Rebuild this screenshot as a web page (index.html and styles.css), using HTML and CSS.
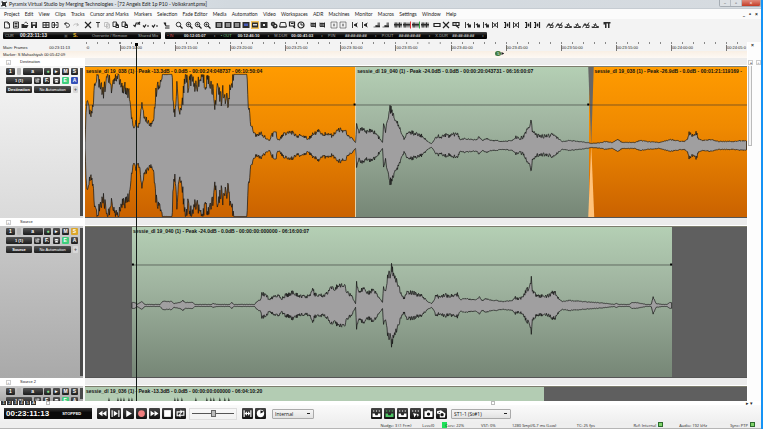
FILE: index.html
```html
<!DOCTYPE html>
<html lang="en">
<head>
<meta charset="utf-8">
<title>Pyramix Virtual Studio</title>
<link rel="stylesheet" href="styles.css">
</head>
<body>
<svg class="sprite" aria-hidden="true">
  <symbol id="new" viewBox="0 0 16 16"><path d="M3 2h7l3 3v9H3z" class="l"/><path d="M10 2v4h3" class="l"/></symbol>
  <symbol id="props" viewBox="0 0 16 16"><path d="M3 2h10v12H3zM5 5h6M5 8h6M5 11h6" class="l"/></symbol>
  <symbol id="open" viewBox="0 0 16 16"><path d="M1 6h5l1 2h8l-3 6H1z" class="f"/><path d="M7 4c3-3 6-1 6 2" class="l"/></symbol>
  <symbol id="save" viewBox="0 0 16 16"><path d="M2 2h12v12H2z" class="f"/><path d="M5 3h6v4H5zM6 10h4v4H6z" class="w"/></symbol>
  <symbol id="film" viewBox="0 0 16 16"><path d="M1 2h14v12H1z" class="f"/><path d="M3 4h4v3H3zM9 4h4v3H9zM3 9h4v3H3zM9 9h4v3H9z" class="w"/></symbol>
  <symbol id="split" viewBox="0 0 16 16"><path d="M2 3h5v10H2zM10 3h4v10h-4M4 8h8" class="l"/></symbol>
  <symbol id="undo" viewBox="0 0 16 16"><path d="M3 6c5-3 10-1 10 3 0 3-4 4-7 3M7 2L3 6l4 3" class="l"/></symbol>
  <symbol id="redo" viewBox="0 0 16 16"><path d="M13 8C9 5 4 5 3 9M10 4l3 4-4 2" class="l dim"/></symbol>
  <symbol id="cut" viewBox="0 0 16 16"><path d="M2 2l12 12M14 2L2 14" class="l bold"/></symbol>
  <symbol id="trim" viewBox="0 0 16 16"><path d="M4 3h8M8 3v10" class="l"/></symbol>
  <symbol id="copyd" viewBox="0 0 16 16"><path d="M3 3h7v8H3zM7 6h6v8H7z" class="l dim"/></symbol>
  <symbol id="copy" viewBox="0 0 16 16"><path d="M2 2h7v9H2z" class="l"/><path d="M7 5h4l3 3v6H7z" class="f"/><path d="M9 10h3v2H9z" class="w"/></symbol>
  <symbol id="fade" viewBox="0 0 16 16"><path d="M1 8l3 3 3-8M9 3l5 4M9 7l5-5" class="l bold"/></symbol>
  <symbol id="fade2" viewBox="0 0 16 16"><path d="M2 9l3 3 3-5M10 10h4" class="l bold"/></symbol>
  <symbol id="loop" viewBox="0 0 16 16"><path d="M2 3l4 7h7M4 14h9M5 3v5" class="l bold"/></symbol>
  <symbol id="zoom" viewBox="0 0 16 16"><circle cx="7" cy="7" r="4.5" class="l"/><path d="M10 10l5 5" class="l bold"/></symbol>
  <symbol id="zoomin" viewBox="0 0 16 16"><circle cx="7" cy="7" r="4.5" class="l"/><path d="M10 10l5 5" class="l bold"/><path d="M5 7h4M7 5v4" class="l"/></symbol>
  <symbol id="panel" viewBox="0 0 16 16"><path d="M1 2h14v12H1z" class="f"/><path d="M4 5h8v2H4zM4 9h8v2H4z" class="w"/></symbol>
  <symbol id="panelb" viewBox="0 0 16 16"><path d="M1 2h14v12H1z" class="f"/><path d="M4 5h8v5H4z" fill="#4659b5"/></symbol>
  <symbol id="panely" viewBox="0 0 16 16"><path d="M0 0h16v16H0z" fill="#f1c15a"/><path d="M2 3h12v10H2z" class="f"/><path d="M4 6h8v3H4z" fill="#ddd"/></symbol>
  <symbol id="screen" viewBox="0 0 16 16"><path d="M1 2h14v12H1z" class="f"/><path d="M6 6h4v4H6z" class="w"/></symbol>
  <symbol id="reel" viewBox="0 0 16 16"><circle cx="6" cy="6" r="4.5" class="f"/><circle cx="10" cy="10" r="5" class="f"/><path d="M5 5h2v2H5zM9 8h3v3H9z" class="w"/></symbol>
  <symbol id="disk" viewBox="0 0 16 16"><path d="M3 3h10l2 9H1z" class="l"/><path d="M2 11h12v2H2z" class="f"/></symbol>
  <symbol id="note" viewBox="0 0 16 16"><path d="M3 2h10v8H3zM6 5h5M10 10l4 4" class="l bold"/></symbol>
  <symbol id="clock" viewBox="0 0 16 16"><circle cx="8" cy="8" r="6" class="l bold"/><path d="M8 4v4h4" class="l"/></symbol>
  <symbol id="grid" viewBox="0 0 16 16"><path d="M2 3h9v8H2z" fill="#999"/><path d="M4 5h10M4 8h10M4 11h10M13 3v10" class="l"/></symbol>
  <symbol id="ibox" viewBox="0 0 16 16"><path d="M2 2h12v12H2zM8 5v6M6 8h4" class="l thin"/></symbol>
  <symbol id="mark" viewBox="0 0 16 16"><path d="M3 2v12M13 4L6 8l7 4" class="l"/><path d="M7 6h5v4H7z" class="f"/></symbol>
  <symbol id="ramp" viewBox="0 0 16 16"><path d="M1 13h13V3H9v5H5v3H1z" fill="#777"/><path d="M5 9h9v3H5z" class="f"/></symbol>
  <symbol id="bars" viewBox="0 0 16 16"><path d="M0 3h16v10H0z" fill="#999"/><path d="M0 6h16v3H0zM3 3h2v10H3zM10 3h2v10h-2z" class="f"/></symbol>
  <symbol id="barsr" viewBox="0 0 16 16"><path d="M0 3h14v10H0z" fill="#999"/><path d="M0 6h14v3H0zM3 3h2v10H3z" class="f"/><path d="M14 1h2v14h-2z" fill="#d33"/></symbol>
  <symbol id="barsg" viewBox="0 0 16 16"><path d="M0 3h14v10H0z" fill="#999"/><path d="M0 6h14v3H0zM3 3h2v10H3z" class="f"/><path d="M14 1h2v14h-2z" fill="#3a4"/></symbol>
  <symbol id="box" viewBox="0 0 16 16"><path d="M2 5h12v6H2z" class="l bold"/></symbol>
  <symbol id="gain" viewBox="0 0 16 16"><path d="M2 3h12v6H2zM5 6h5M8 9l6 5" class="l bold"/></symbol>
  <symbol id="inl" viewBox="0 0 16 16"><path d="M3 2v12" class="l"/><path d="M5 7l5-3v3h4v6H8V9z" class="f"/></symbol>
  <symbol id="inr" viewBox="0 0 16 16"><path d="M3 2v12M13 2v12M5 4l6 8M11 4l-6 8" class="l"/></symbol>
  <symbol id="edge" viewBox="0 0 16 16"><path d="M2 3h3v10H2M13 2v12M7 8h4M9 5v6" class="l bold"/></symbol>
  <symbol id="env" viewBox="0 0 16 16"><path d="M1 13l5-8 3 6 5-8M3 8h11v5H7" class="l"/></symbol>
  <symbol id="env2" viewBox="0 0 16 16"><path d="M1 12h5l3-7 2 6h4v2H2M5 6l4 4" class="l"/></symbol>
  <symbol id="pi" viewBox="0 0 16 16"><path d="M1 2h14v3h-2v9h-3V5H7v9H4V7H1z" class="f"/></symbol>
  <symbol id="rew" viewBox="0 0 16 16"><path d="M8 3v10L1 8zM15 3v10L8 8z"/></symbol>
  <symbol id="ff" viewBox="0 0 16 16"><path d="M8 3v10l7-5zM1 3v10l7-5z"/></symbol>
  <symbol id="playsel" viewBox="0 0 16 16"><path d="M1 2h2v12H1zM13 2h2v12h-2zM5 3v10l7-5z"/></symbol>
  <symbol id="play" viewBox="0 0 16 16"><path d="M4 2v12l10-6z"/></symbol>
  <symbol id="rec" viewBox="0 0 16 16"><circle cx="8" cy="8" r="6" fill="#f07e7e"/></symbol>
  <symbol id="stop" viewBox="0 0 16 16"><path d="M2 2h12v12H2z"/></symbol>
  <symbol id="cycle" viewBox="0 0 16 16"><path d="M5 12H2V5h8M11 4h3v7H7" fill="none" stroke="#fff" stroke-width="2"/><path d="M8 1l4 4-4 4zM8 7v8l-4-4z"/></symbol>
  <symbol id="span" viewBox="0 0 16 16"><path d="M1 2h2v12H1zM13 2h2v12h-2zM3 8l4-4v3h2V4l4 4-4 4V9H7v3z"/></symbol>
  <symbol id="dial" viewBox="0 0 16 16"><circle cx="8" cy="8" r="6.5"/><path d="M8 8V2l6 3z" fill="#111"/></symbol>
  <symbol id="tray" viewBox="0 0 16 16"><path d="M1 8h4l1 3h4l1-3h4v6H1z"/><path d="M2 2h2v3H2zM7 2h2v3H7zM12 2h2v3h-2z" opacity=".7"/></symbol>
  <symbol id="keys" viewBox="0 0 16 16"><path d="M2 2h2v3H2zM7 2h2v3H7zM12 2h2v3h-2z" opacity=".7"/><path d="M4 7l6 2-4 6zM10 8l4 2-2 4z"/></symbol>
  <symbol id="cam" viewBox="0 0 16 16"><path d="M1 4h4l1-2h4l1 2h4v10H1z"/><circle cx="8" cy="9" r="3" fill="#111"/></symbol>
  <symbol id="cams" viewBox="0 0 16 16"><path d="M0 4l7-2 8 6-1 7H5V9L0 8z"/><circle cx="9" cy="10" r="3" fill="#111"/><circle cx="4" cy="6" r="1" fill="#111"/></symbol>
  <symbol id="route" viewBox="0 0 16 16"><path d="M3 2v11h10M6 3h7v3H6v4h7" fill="none" stroke="#fff" stroke-width="2"/></symbol>
  <symbol id="phone" viewBox="0 0 16 16"><path d="M1 7c2-5 12-5 14 0l-4 1V6H5v2zM5 8h6l2 6H3z"/></symbol>
</svg>

<div class="app">
  <header class="title">
    <span class="logo"></span>
    <span class="name">Pyramix Virtual Studio by Merging Technologies - [72 Angels Edit 1p P10 - Volkskrant.pmx]</span>
    <span class="winbtns"><button aria-label="Minimize">–</button><button aria-label="Restore">▫</button><button class="close" aria-label="Close">×</button></span>
  </header>
  <div class="menubar">
    <nav class="menu">
      <button>Project</button><button>Edit</button><button>View</button><button>Clips</button><button>Tracks</button><button>Cursor and Marks</button><button>Markers</button><button>Selection</button><button>Fade Editor</button><button>Media</button><button>Automation</button><button>Video</button><button>Workspaces</button><button>ADR</button><button>Machines</button><button>Monitor</button><button>Macros</button><button>Settings</button><button>Window</button><button>Help</button>
    </nav>
    <span class="mdi"><b>_</b><b>▫</b><b>×</b></span>
  </div>
  <div class="tools" id="tools"></div>

  <div class="info">
    <div class="lcd cursor"><i>CUR</i><b class="time">00:23:11:13</b><i class="sq">▣</i><b class="solo">S.</b><i>Overwrite / Remove</i><i>Shared Mix</i></div>
    <div class="lcd marks">
      <span><i class="red">• IN</i><b>00:12:05:07</b><b>:</b></span>
      <span><i class="green">• OUT</i><b>00:12:46:10</b><b>:</b></span>
      <span><i>M.DUR</i><b>00:00:41:03</b><b>:</b></span>
      <span><i>P.IN</i><b>##:##:##:##</b><b>:</b></span>
      <span><i>P.OUT</i><b>##:##:##:##</b><b>:</b></span>
      <span><i>X.DUR</i><b>##:##:##:##</b><b>:</b></span>
    </div>
  </div>

  <main class="work">
    <div class="row ruler">
      <div class="side"><span>Main: Frames</span><span>00:23:11:13</span></div>
      <div class="scale"><span class="first">:0</span><span>00:23:10:00</span><span>00:23:15:00</span><span>00:23:20:00</span><span>00:23:25:00</span><span>00:23:30:00</span><span>00:23:35:00</span><span>00:23:40:00</span><span>00:23:45:00</span><span>00:23:50:00</span><span>00:23:55:00</span><span>00:24:00:00</span><span class="last">00:24:05:0</span></div>
      <div class="end">×</div>
    </div>
    <div class="row marker">
      <div class="side">Marker: S Mahashiyah 00:05:42:09</div>
      <div class="flags"><span class="pin">5</span><span class="flag"></span></div>
      <div class="end"></div>
    </div>
    <div class="row head"><div class="side"><button class="fold" aria-label="Fold">+</button>Destination</div><div class="gap"></div><div class="end"><button class="fold up" aria-label="Scroll up">▴</button><button class="fold" aria-label="Zoom in">+</button></div></div>

    <section class="row lane">
      <div class="side panel light">
        <div class="ctl"><button class="n">1</button><button class="mini" aria-label="Color"></button><button class="w">a</button><button class="rdy">●</button><button>▸</button><button>M</button><button>S</button></div>
        <div class="ctl"><button class="in">1 (1)</button><button aria-label="Route"><svg><use href="#route"/></svg></button><button>F.</button><button aria-label="Listen"><svg><use href="#phone"/></svg></button><button class="on">E</button><button class="auto">A</button></div>
        <div class="ctl"><button class="in">Destination</button><button class="am">No Automation</button><button class="plus">+</button></div>
        <div class="meter"></div>
      </div>
      <div class="track">
        <div class="clip orange c1">sessie_dl 19_038 (1) - Peak -13.3dB - 0.0dB - 00:00:24:048737 - 06:10:50:04</div>
        <div class="clip sage c2">sessie_dl 19_040 (1) - Peak -24.0dB - 0.0dB - 00:00:20:043731 - 06:16:00:07</div>
        <div class="clip orange c3">sessie_dl 19_038 (1) - Peak -26.9dB - 0.0dB - 00:01:21:119169 -</div>
        <svg class="wave" viewBox="0 0 663 152" preserveAspectRatio="none" aria-hidden="true">
          <path d="M504 0h5.500l-2.500 79z" fill="#666"/><path d="M507 79l-3 73h6z" fill="#ffc27a"/>
          <path id="wave-dest" class="shape"/>
          <path d="M0 38.500h663" class="gainline"/><path d="M269 37h2v2h-2zM503 37h2v2h-2z"/>
        </svg>
      </div>
      <div class="end"><div class="bar"></div></div>
    </section>

    <div class="row head"><div class="side"><button class="fold" aria-label="Fold">+</button>Source</div><div class="gap"></div><div class="end"></div></div>

    <section class="row lane">
      <div class="side panel grey">
        <div class="ctl"><button class="n">1</button><button class="mini" aria-label="Color"></button><button class="w">a</button><button class="rdy">●</button><button>▸</button><button>M</button><button class="soloed">S</button></div>
        <div class="ctl"><button class="in">1 (1)</button><button aria-label="Route"><svg><use href="#route"/></svg></button><button>F.</button><button aria-label="Listen"><svg><use href="#phone"/></svg></button><button class="on">E</button><button>A</button></div>
        <div class="ctl"><button class="in">Source</button><button class="am">No Automation</button><button class="plus">+</button></div>
        <div class="meter"></div>
      </div>
      <div class="track">
        <div class="void v1"></div>
        <div class="clip sage c4">sessie_dl 19_040 (1) - Peak -24.0dB - 0.0dB - 00:00:00:000000 - 06:16:00:07</div>
        <div class="void v2"></div>
        <svg class="wave" viewBox="0 0 663 152" preserveAspectRatio="none" aria-hidden="true">
          <path id="wave-src" class="shape"/>
          <path d="M47 38.500h541" class="gainline"/><path d="M47 37h2v2h-2zM586 37h2v2h-2z"/>
        </svg>
      </div>
      <div class="end"></div>
    </section>

    <div class="row head"><div class="side"><button class="fold" aria-label="Fold">+</button>Source 2</div><div class="gap"></div><div class="end"></div></div>

    <section class="row lane cropped">
      <div class="side panel grey">
        <div class="ctl"><button class="n">1</button><button class="mini" aria-label="Color"></button><button class="w">a</button><button class="rdy">●</button><button>▸</button><button>M</button><button>S</button></div>
        <div class="ctl"><button class="in">1 (1)</button><button aria-label="Route"><svg><use href="#route"/></svg></button><button>F.</button><button aria-label="Listen"><svg><use href="#phone"/></svg></button><button class="on">E</button><button>A</button></div>
        <div class="meter"></div>
      </div>
      <div class="track">
        <div class="clip sage flat c5">sessie_dl 19_036 (1) - Peak -13.3dB - 0.0dB - 00:00:00:000000 - 06:04:10:20</div>
        <div class="void v3"></div>
        <svg class="wave" viewBox="0 0 663 15" preserveAspectRatio="none" aria-hidden="true"><path id="wave-src2" class="peaks"/></svg>
      </div>
      <div class="end"></div>
    </section>
    <div class="playhead"></div>
  </main>

  <div class="pager">
    <span class="pages"><b>1</b><b>2</b><b>3</b><b>4</b><b>5</b><b>A</b></span>
    <span class="knob k1"></span><span class="knob k2"></span><span class="arrows">▸ ▾</span>
  </div>

  <footer class="transport">
    <div class="clock"><b>00:23:11:13</b><span>STOPPED</span></div>
    <div class="grp">
      <button aria-label="Rewind"><svg><use href="#rew"/></svg></button><button aria-label="Play selection"><svg><use href="#playsel"/></svg></button><button aria-label="Play"><svg><use href="#play"/></svg></button><button aria-label="Record"><svg><use href="#rec"/></svg></button><button aria-label="Forward"><svg><use href="#ff"/></svg></button><button aria-label="Stop"><svg><use href="#stop"/></svg></button><button aria-label="Loop"><svg><use href="#cycle"/></svg></button>
    </div>
    <input class="jog" type="range" aria-label="Shuttle">
    <div class="grp">
      <button aria-label="Chase"><svg><use href="#span"/></svg></button><button aria-label="Jog"><svg><use href="#dial"/></svg></button>
    </div>
    <select class="src" aria-label="Machine"><option>Internal</option></select>
    <div class="grp auto-grp">
      <button aria-label="Tray 1"><svg><use href="#tray"/></svg></button><button class="lit" aria-label="Tray 2"><svg><use href="#tray"/></svg></button><button aria-label="Tray 3"><svg><use href="#tray"/></svg></button><button aria-label="Keys"><svg><use href="#keys"/></svg></button><button aria-label="Snapshot"><svg><use href="#cam"/></svg></button><button aria-label="Snapshots"><svg><use href="#cams"/></svg></button>
    </div>
    <select class="bus" aria-label="Bus"><option>ST1-1 (St#1)</option></select>
  </footer>
  <div class="status">
    <span class="s1">Nudge: 3 (1 Frm)</span><span class="s2">Level0</span><span class="s3 load">Core: 22%</span><span class="s4">VST: 0%</span><span class="s5">1280 Smpl/6.7 ms (Low)</span><span class="s6">TC: 25 fps</span><span class="s7">Ref: Internal<em></em></span><span class="s8">Audio: 192 kHz</span><span class="s9">Sync: PTP<em></em></span>
  </div>
</div>
<script src="app.js"></script>
</body>
</html>
```
FILE: styles.css
```css
* { box-sizing: border-box; }
body { margin: 0; background: #fff; color: #222; font: 5px/8px Lato, "Liberation Sans", sans-serif; }
button { margin: 0; padding: 0; border: 0; background: none; color: inherit; font: inherit; }
.sprite { position: absolute; width: 0; height: 0; }
.l { fill: none; stroke: #222; stroke-width: 1.8; }
.bold { stroke-width: 2.4; }
.thin { stroke-width: 1; }
.dim { stroke: #bbb; }
.f { fill: #2c2c2c; }
.w { fill: #eee; }

.app { display: flex; flex-direction: column; min-height: 100vh; border-right: 2px solid #1593f5; overflow: hidden; }

.title { display: flex; align-items: center; gap: 2px; height: 9px; padding-left: 1px; background: linear-gradient(90deg, #e6ebf0, #d2d9df 30%, #d6dbe0); border-bottom: 1px solid #c6ccd2; color: #222; }
.logo { width: 6px; height: 6px; border: 1px dashed #fff; border-radius: 2px; background: #333; }
.name { flex: 1; white-space: nowrap; }
.winbtns { display: flex; align-self: flex-start; height: 7px; line-height: 6px; border: 1px solid #a5acb3; border-top: 0; border-radius: 0 0 2px 2px; overflow: hidden; }
.winbtns button { width: 11px; background: #dde1e5; border-right: 1px solid #b5bbc2; color: #666; }
.winbtns .close { width: 18px; background: linear-gradient(#e08a7b, #c33b25); color: #fff; border: 0; }

.menubar { display: flex; justify-content: space-between; height: 10px; padding: 0 3px 0 4px; align-items: center; background: #fbfbfb; }
.menu { display: flex; justify-content: space-between; width: 60%; }
.menu button { white-space: nowrap; }
.mdi { display: flex; gap: 4px; line-height: 5px; color: #000; }

.tools { display: flex; gap: 3px; width: 80.4%; height: 12px; padding-left: 2px; align-items: center; }
.tools div { display: flex; min-width: 0; }
.tools button { flex: 1 1 0; min-width: 0; height: 9px; display: flex; justify-content: center; align-items: center; }
.tools svg { width: 8px; height: 8px; flex: none; }
.tools, .info { background: #f3f3f3; box-shadow: 200px 0 #f3f3f3; }

.info { display: flex; gap: 4px; padding: 1px 3px 3px; height: 11px; }
.lcd { display: flex; align-items: center; height: 7px; border-radius: 1px; background: linear-gradient(#444, #0c0c0c 50%, #000); color: #e8e8e8; font: 4px/7px "Liberation Sans", sans-serif; white-space: nowrap; }
.lcd i { color: #b0b0b0; font-style: normal; }
.lcd .red { color: #d05050; }
.lcd .green { color: #6dbd7d; }
.lcd .solo { color: #e8b923; }
.lcd .sq { color: #555; }
.cursor { display: grid; grid-template-columns: 15px 44px 9px 19px 46px 1fr; width: 158px; padding-left: 2px; }
.cursor .time, .cursor .solo { font-size: 5px; }
.marks { width: 322px; }
.marks span { flex: 1; display: grid; grid-template-columns: 17px 30px 1fr; padding-left: 2px; }

.work { flex: 1; display: flex; flex-direction: column; position: relative; }
.row { display: grid; grid-template-columns: 85px 1fr 14px; }
.ruler { height: 9px; font: 4px/7px "Liberation Sans", sans-serif; background: #f3f3f3; }
.ruler .side { display: flex; justify-content: space-between; padding: 2px 15px 0 3px; white-space: nowrap; }
.scale { display: flex; overflow: hidden; }
.scale span { flex: 552 1 0; min-width: 0; padding-top: 2px; text-indent: 1px; white-space: nowrap; background: linear-gradient(#777, #777) 0 100% / 1px 6px no-repeat, linear-gradient(90deg, #888 1px, transparent 1px) 0 0 / 20% 2px repeat-x; }
.scale .first { flex-grow: 350; background: linear-gradient(90deg, transparent 9px, #888 9px, #888 10px, transparent 10px) 3px 0 / 11px 2px repeat-x; }
.scale .last { flex-grow: 210; background-size: 1px 6px, 11px 2px; overflow: hidden; }
.ruler .end { padding-left: 3px; font-weight: bold; font-size: 5px; }
.marker { height: 7px; font: 4px/7px "Liberation Sans", sans-serif; background: linear-gradient(#f9efe4, #fdf9f4); }
.marker .side { padding-left: 3px; white-space: nowrap; }
.flags { display: flex; padding-left: 62%; }
.pin { width: 6px; height: 5px; border-radius: 3px; background: #3f7a3f; color: #fff; line-height: 5px; text-align: center; }
.flag { width: 3px; height: 3px; margin-top: 1px; background: #222; clip-path: polygon(0 0, 100% 50%, 0 100%); }

.head { height: 8px; font: 4px/8px "Liberation Sans", sans-serif; background: #fff; }
.head .side { display: flex; align-items: center; gap: 9px; padding-left: 6px; }
.head .gap { background: #ececec; margin-bottom: 1px; }
.head .end { display: flex; justify-content: space-between; align-items: center; }
.fold { width: 5px; height: 5px; border: 1px solid #ccc; line-height: 3px; color: #777; }

.lane { flex: 1 0 152px; }
.cropped { flex: 0 0 15px; height: 15px; grid-template-rows: 100%; overflow: hidden; }
.panel { position: relative; display: flex; flex-direction: column; gap: 2px; padding: 2px 7px 0 6px; min-height: 0; overflow: hidden; }
.panel::after { content: ""; position: absolute; top: 0; right: 0; bottom: 0; width: 2px; background: #f6f6f6; }
.light { background: linear-gradient(#f5f5f5, #dadada); }
.grey { background: linear-gradient(#cacaca, #a9a9a9); }
.meter { position: absolute; top: 2px; right: 2px; bottom: 2px; width: 3px; background: #4a4a4a; }
.ctl { display: flex; flex: none; justify-content: space-between; height: 7px; }
.ctl button { width: 7px; height: 7px; border-radius: 1px; background: linear-gradient(#555, #1c1c1c); color: #fff; font: bold 5px/7px "Liberation Sans", sans-serif; white-space: nowrap; overflow: hidden; }
.ctl svg { width: 5px; height: 5px; display: block; margin: 0 auto; fill: #fff; }
.ctl .n { width: 9px; }
.ctl .mini { width: 4px; background: #b5b5b5; }
.ctl .w { width: 20px; }
.ctl .in { width: 26px; font-size: 4px; }
.ctl .am { width: 37px; font-size: 4px; font-weight: normal; }
.ctl .plus { width: 5px; background: #d8d8d8; color: #555; }
.ctl .rdy { color: #84e08a; }
.ctl .on { background: #3fcf7c; }
.ctl .auto { background: #3450b8; }
.ctl .soloed { background: #dba62b; }

.track { position: relative; display: flex; min-width: 0; border-top: 1px solid #7d7d6d; border-bottom: 1px solid #555; }
.cropped .track { border-bottom: 0; }
.clip { min-width: 0; overflow: hidden; text-indent: 1px; color: #111; font: bold 5px/8px "Liberation Sans", sans-serif; white-space: nowrap; }
.orange { background: linear-gradient(#ff9b00, #f08a00 40%, #ca6200); }
.sage { background: linear-gradient(#b4cfb4, #9fb39f 40%, #768676); }
.flat { background: #b3ccb3; }
.void { background: #5f5f5f; }
.c1 { flex: 271 1 0; border-right: 1px solid #e9d3a8; }
.c2 { flex: 234 1 0; }
.c3 { flex: 158 1 0; text-indent: 5px; }
.v1 { flex: 47 1 0; }
.c4 { flex: 541 1 0; }
.v2 { flex: 75 1 0; }
.c5 { flex: 460 1 0; }
.v3 { flex: 203 1 0; }
.wave { position: absolute; top: 0; left: 0; width: 100%; height: 100%; }
.shape { fill: #a09fa0; stroke: #111; stroke-width: 0.7; }
.peaks { fill: #3d463d; }
.gainline { fill: none; stroke: #333; stroke-width: 0.6; }
.end { background: #fdfdfd; border-left: 1px solid #fff; }
.bar { width: 4px; height: 80px; border: 1px solid #bbb; border-top: 0; background: #f5f5f5; }
.playhead { position: absolute; top: 1px; bottom: 0; left: calc(85px + (100% - 99px) * 0.077); width: 1px; background: #151c18; }
.playhead::before { content: ""; position: absolute; top: 0; left: -1px; width: 3px; height: 3px; background: #000; }

.pager { display: flex; height: 4px; align-items: center; background: #fff; }
.pages { display: flex; gap: 1px; width: 46px; padding-left: 1px; }
.pages b { width: 5px; height: 4px; background: #333; color: #fff; font: 4px/4px "Liberation Sans", sans-serif; text-align: center; }
.knob { width: 4px; height: 4px; border: 1px solid #bbb; background: #fff; }
.k2 { margin-left: 58%; }
.arrows { margin-left: auto; padding-right: 8px; line-height: 4px; }

.transport { display: flex; align-items: center; height: 17px; padding-left: 4px; background: linear-gradient(#fafafa, #efefef); }
.clock { display: flex; align-items: center; gap: 13px; width: 88px; height: 11px; padding-left: 2px; margin-right: 5px; background: linear-gradient(#3a3a3a, #0a0a0a 40%); color: #fff; font-family: "Liberation Sans", sans-serif; }
.clock b { font-size: 8px; }
.clock span { font: bold 4px/8px "Liberation Sans", sans-serif; }
.grp { display: flex; gap: 2px; }
.grp button { width: 11px; height: 11px; border-radius: 1px; background: linear-gradient(#444, #111); display: flex; align-items: center; justify-content: center; }
.grp svg { width: 9px; height: 9px; flex: none; fill: #fff; }
.grp .lit svg { fill: #4fc667; }
.jog { appearance: none; width: 48px; height: 12px; margin: 0 5px 0 3px; border: 1px solid #ddd; background: linear-gradient(#555, #555) center / 42px 1px no-repeat; }
.jog::-webkit-slider-thumb { appearance: none; width: 5px; height: 7px; border: 1px solid #666; background: #bbb; }
.transport select { appearance: none; height: 10px; margin: 0; padding: 0 2px; border: 1px solid #aaa; border-radius: 1px; background: linear-gradient(90deg, #222, #222) right 3px center / 3px 1px no-repeat, linear-gradient(#f5f5f5, #e2e2e2); color: #111; font: 5px/8px "Open Sans", sans-serif; }
.transport .src { width: 42px; margin: 0 57px 0 6px; }
.transport .bus { width: 60px; margin-left: 4px; }

.status { display: flex; height: 8px; padding-left: 50%; border-bottom: 2px solid #b5b5b5; background: #eee; font: 4px/7px "Open Sans", sans-serif; white-space: nowrap; }
.status span { min-width: 0; }
.s1 { flex: 42; } .s2 { flex: 20; } .s3 { flex: 36; } .s4 { flex: 31; } .s5 { flex: 65; } .s6 { flex: 57; } .s7 { flex: 46; } .s8 { flex: 51; } .s9 { flex: 31; }
.status .load { padding-left: 3px; background: linear-gradient(#1ee05a, #1ee05a) 0 0 / 5px 6px no-repeat; }
.status em { display: inline-block; width: 5px; height: 5px; margin-left: 2px; border: 1px solid #2c6b2c; background: #7fd36a; vertical-align: top; }
```
FILE: app.js
```js
// Toolbar: one string per group, one icon name per button.
const groups = [
  "new props open save", "film split", "undo redo", "cut trim copyd copy copy", "fade fade2 fade2", "loop",
  "zoom zoomin zoomin zoomin", "panel panel panel panelb panely screen reel disk note clock", "grid grid",
  "ibox ibox", "mark mark", "ramp ramp", "bars barsr barsg bars", "box cut gain", "inl inl inl inr",
  "edge inr", "edge edge", "env env env2 env2 env env2", "pi"
];
document.getElementById("tools").innerHTML = groups.map(g => {
  const names = g.split(" ");
  return `<div style="flex:${names.length} 1 0">` +
    names.map(n => `<button aria-label="${n}"><svg><use href="#${n}"/></svg></button>`).join("") + "</div>";
}).join("");

// Envelopes: x in lane units, half height around the centre line.
const loud = [[0,3],[1,30],[2,40],[5,33],[8,39],[10,66],[12,71],[15,62],[18,53],[22,66],[24,68],[27,54],[30,71],[34,71],[36,61],[40,58],[44,51],[47,30],[48,18],[51,24],[53,17],[55,24],[57,42],[59,29],[63,24],[67,20],[69,30],[71,54],[75,66],[78,76],[87,76],[88,48],[90,30],[92,62],[93,45],[95,34],[97,36],[99,60],[101,72],[103,60],[107,69],[110,57],[113,62],[117,70],[120,63],[125,66],[128,55],[131,36],[132,60],[137,45],[138,56],[141,40],[142,60],[143,37],[145,55],[148,65],[149,80],[162,80],[163,48],[164,40],[166,22],[168,16],[172,9],[176,13],[181,7],[185,5],[187,10],[191,14],[193,6],[195,6],[198,10],[203,14],[208,13],[213,9],[218,11],[223,6],[228,11],[234,15],[238,11],[242,12],[247,10],[253,15],[256,16],[258,14],[260,17],[263,11],[267,8],[270,4],[271,3]];
const phrase = [[298,3],[299,20],[301,14],[302,22],[303,28],[305,33],[307,38],[309,30],[312,25],[315,17],[318,9],[320,7],[322,13],[328,13],[333,11],[338,10],[343,4],[347,2],[349,4],[351,9],[357,9],[360,11],[365,9],[368,11],[373,11],[376,6],[380,7],[387,6],[392,6],[395,8],[398,5],[402,7],[407,5],[412,5],[418,4],[428,5],[431,8],[435,7],[439,9],[442,15],[445,18],[447,27],[448,14],[452,10],[462,9],[465,10]];
const bridge = [[272,23],[274,14],[278,17],[282,13],[286,15],[290,13],[293,10],[297,4]];
const tail = [[468,13],[471,11],[475,6],[478,4],[486,5],[495,4],[503,3],[507,2],[518,3],[521,4],[528,3],[534,6],[538,3],[551,3],[556,5],[563,4],[575,3],[583,5],[587,6],[591,5],[600,4],[603,6],[605,12],[608,10],[612,13],[615,6],[620,5],[626,6],[635,4],[650,4],[660,5],[663,4]];
const source = [[47,3],[50,3],[52,1],[57,4],[60,1],[75,1],[78,4],[87,4],[89,2],[95,3],[98,5],[100,3],[108,3],[110,1],[127,1],[128,2],[132,1],[145,1],[147,3],[149,1],[170,1],[172,4],[176,6],[177,12],[180,11],[185,6],[190,10],[195,9],[197,6],[200,10],[205,11],[208,14],[212,11],[217,9],[225,9],[228,17],[230,11],[238,10],[243,12],[245,17],[250,17],[253,20],[260,20],[262,15],[267,9],[271,2],[272,22],[274,14],[279,17],[284,13],[288,15],[292,12],[296,6]];
const decay = [[468,13],[472,12],[475,6],[478,4],[485,5],[498,4],[512,3],[522,2],[530,1],[532,2],[535,1],[545,1],[548,3],[552,3],[562,1],[567,1],[569,8],[572,2],[578,1],[583,1],[586,3],[588,3]];

function noise(seed) {
  let s = seed;
  return () => (s = (s * 16807) % 2147483647) / 2147483647;
}

function wave(id, points, mid, top, bottom, seed) {
  const rnd = noise(seed), up = [], down = [];
  for (let i = 0; i < points.length - 1; i++) {
    const [x0, a0] = points[i], [x1, a1] = points[i + 1];
    const n = Math.max(1, Math.round((x1 - x0) * 2));
    for (let k = 0; k < n; k++) {
      const a = a0 + (a1 - a0) * k / n;
      const spread = a > 30 ? 14 : a > 7 ? 3 + a * 0.12 : a * 0.2;
      const wobble = (rnd() - 0.5) * spread;
      const x = (x0 + (x1 - x0) * k / n).toFixed(1);
      up.push(`${x} ${Math.max(top, mid - a - wobble).toFixed(1)}`);
      down.unshift(`${x} ${Math.min(bottom, mid + a + wobble * 0.9).toFixed(1)}`);
    }
  }
  document.getElementById(id).setAttribute("d", "M" + up.concat(down).join("L") + "Z");
}

wave("wave-dest", [...loud, ...bridge, ...phrase, ...tail], 79.5, 7.5, 151.5, 41);
wave("wave-src", [...source, ...phrase, ...decay], 79.5, 7.5, 151.5, 97);

// Tops of the peaks that show above the crop of the last lane.
document.getElementById("wave-src2").setAttribute("d",
  [23, 32, 35, 38, 43, 46, 89, 92, 96, 110, 121, 125, 128, 134, 139, 143]
    .map((x, i) => { const h = 4 + (i * 5) % 5; return `M${x} 15l1-${h}l1 ${h}z`; }).join(""));
```
